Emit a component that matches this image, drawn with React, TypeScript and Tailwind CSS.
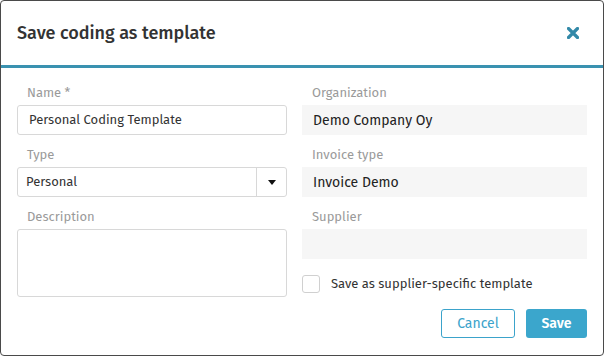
export default function App() {
  const font = { fontFamily: '"Fira Sans", "Noto Sans", "Open Sans", sans-serif' };

  return (
    <div className="w-[604px] h-[356px] bg-white" style={font}>
      <div className="h-full border border-[#4a4a4a] rounded-[4px] flex flex-col overflow-hidden">
        <div className="h-[64px] shrink-0 flex items-center justify-between pl-4 pr-[24px]">
          <h1 className="text-[18px] font-medium text-[#333]">Save coding as template</h1>
          <button className="text-[#3389a8]">
            <svg width="12" height="12" viewBox="0 0 12 12">
              <path d="M1.5 1.5 L10.5 10.5 M10.5 1.5 L1.5 10.5" stroke="currentColor" strokeWidth="3.2" strokeLinecap="round" />
            </svg>
          </button>
        </div>
        <div className="h-[3px] bg-[#3a92b0] shrink-0"></div>

        <div className="px-4 pt-4 flex flex-col">
          <div className="grid grid-cols-[270px_1fr] gap-x-[15px]">
            <div className="flex flex-col">
              <label className="text-[13px] leading-[18px] text-[#9a9a9a] px-[10px]">Name *</label>
              <div className="mt-[3px] h-[30px] border border-[#d8d8d8] rounded-[3px] flex items-center px-[11px] text-[13px] text-[#333]">
                Personal Coding Template
              </div>

              <label className="mt-[11px] text-[13px] leading-[18px] text-[#9a9a9a] px-[10px]">Type</label>
              <div className="mt-[3px] h-[30px] border border-[#d8d8d8] rounded-[3px] flex items-center text-[13px] text-[#333]">
                <span className="flex-1 px-[8px]">Personal</span>
                <span className="w-[30px] h-full border-l border-[#d8d8d8] flex items-center justify-center">
                  <svg width="8" height="5" viewBox="0 0 8 5">
                    <path d="M0 0 H8 L4 5 Z" fill="#111" />
                  </svg>
                </span>
              </div>

              <label className="mt-[11px] text-[13px] leading-[18px] text-[#9a9a9a] px-[10px]">Description</label>
              <div className="mt-[3px] h-[68px] border border-[#d8d8d8] rounded-[3px]"></div>
            </div>

            <div className="flex flex-col">
              <label className="text-[13px] leading-[18px] text-[#9a9a9a] px-[10px]">Organization</label>
              <div className="mt-[3px] h-[30px] bg-[#f6f6f6] flex items-center px-[11px] text-[14px] text-[#222]">
                Demo Company Oy
              </div>

              <label className="mt-[11px] text-[13px] leading-[18px] text-[#9a9a9a] px-[10px]">Invoice type</label>
              <div className="mt-[3px] h-[30px] bg-[#f6f6f6] flex items-center px-[11px] text-[14px] text-[#222]">
                Invoice Demo
              </div>

              <label className="mt-[11px] text-[13px] leading-[18px] text-[#9a9a9a] px-[10px]">Supplier</label>
              <div className="mt-[3px] h-[30px] bg-[#f6f6f6]"></div>

              <div className="mt-[15px] flex items-center gap-[11px]">
                <span className="w-[18px] h-[18px] border border-[#d0d0d0] rounded-[3px]"></span>
                <span className="text-[13px] text-[#333]">Save as supplier-specific template</span>
              </div>
            </div>
          </div>

          <div className="mt-[12px] flex justify-end gap-[11px]">
            <button className="w-[74px] h-[29px] border border-[#3ba3cb] rounded-[3px] text-[14px] text-[#3ba3cb]">Cancel</button>
            <button className="w-[61px] h-[29px] bg-[#3ba6cc] rounded-[3px] text-[14px] font-semibold text-white">Save</button>
          </div>
        </div>
      </div>
    </div>
  );
}
